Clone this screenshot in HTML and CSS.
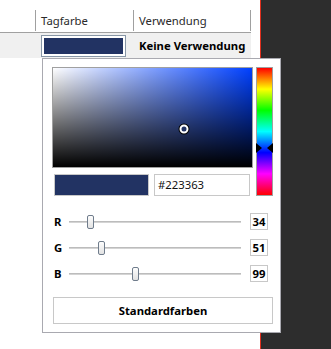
FILE: index.html
```html
<!DOCTYPE html>
<html>
<head>
<meta charset="utf-8">
<link rel="stylesheet" href="styles.css">
</head>
<body>
<div class="app">
  <div class="pane">
    <div class="header">
      <div class="hcell c1"></div>
      <div class="hcell c2">Tagfarbe</div>
      <div class="hcell c3">Verwendung</div>
    </div>
    <div class="row">
      <div class="cell c1"></div>
      <div class="cell c2"><div class="swatch"><div class="swatch-fill"></div></div></div>
      <div class="cell c3 bold">Keine Verwendung</div>
    </div>
  </div>
  <div class="redline"></div>
  <div class="dark"></div>

  <div class="popup">
    <div class="picker">
      <div class="sv">
        <div class="sv-white"></div>
        <div class="sv-black"></div>
        <div class="sv-marker" style="left:131px;top:61px"></div>
      </div>
      <div class="hue">
        <div class="tri tri-l" style="top:80px"></div>
        <div class="tri tri-r" style="top:80px"></div>
      </div>
      <div class="preview-row">
        <div class="preview"></div>
        <div class="hex">#223363</div>
      </div>
    </div>
    <div class="sliders">
      <div class="srow">
        <div class="slabel">R</div>
        <div class="track"><div class="thumb" style="left:18px"></div></div>
        <div class="sval">34</div>
      </div>
      <div class="srow">
        <div class="slabel">G</div>
        <div class="track"><div class="thumb" style="left:29px"></div></div>
        <div class="sval">51</div>
      </div>
      <div class="srow">
        <div class="slabel">B</div>
        <div class="track"><div class="thumb" style="left:63px"></div></div>
        <div class="sval">99</div>
      </div>
    </div>
    <div class="btn">Standardfarben</div>
  </div>
</div>
</body>
</html>
```
FILE: styles.css
```css
html, body {
  margin: 0;
  padding: 0;
}
body {
  font-family: "Noto Sans", "Open Sans", sans-serif;
  font-size: 11.3px;
  color: #000;
  background: #fff;
}
.app {
  position: relative;
  display: flex;
  width: 331px;
  height: 349px;
  overflow: hidden;
}
.pane {
  width: 260px;
  background: #fff;
}
.redline {
  width: 1px;
  background: #e0301e;
}
.dark {
  flex: 1;
  background: #2d2d2d;
}
.header {
  display: flex;
  margin-top: 10px;
  height: 21px;
  width: 251px;
}
.hcell {
  box-sizing: border-box;
  line-height: 21px;
  padding-left: 5px;
  white-space: nowrap;
  color: #2a2a2a;
}
.hcell.c2, .hcell.c3 {
  border-left: 1px solid #a0a0a0;
}
.hcell.c3 {
  border-right: 1px solid #a0a0a0;
}
.c1 { width: 35px; }
.c2 { width: 98px; }
.c3 { width: 118px; }
.row {
  display: flex;
  margin-top: 1px;
  border-top: 1px solid #a0a0a0;
  background: #f0f0f0;
  height: 25px;
  width: 251px;
}
.cell {
  box-sizing: border-box;
  white-space: nowrap;
}
.cell.c2 {
  padding: 2px 0 0 6px;
}
.cell.c3 {
  padding-left: 6px;
  line-height: 25px;
}
.bold { font-weight: bold; }
.swatch {
  box-sizing: border-box;
  width: 85px;
  height: 22px;
  border: 1px solid #8796a6;
  background: #fff;
  padding: 2px;
}
.swatch-fill {
  width: 100%;
  height: 100%;
  background: #223363;
}
.popup {
  position: absolute;
  left: 42px;
  top: 58px;
  width: 239px;
  height: 275px;
  box-sizing: border-box;
  background: #fff;
  border: 1px solid #a9a9b0;
  padding: 8px 8px 9px 9px;
  display: flex;
  flex-direction: column;
}
.picker {
  display: grid;
  grid-template-columns: 201px 17px;
  grid-template-rows: 101px 22px;
  column-gap: 3px;
  row-gap: 6px;
}
.sv {
  position: relative;
  box-sizing: border-box;
  border: 1px solid #a0a0a0;
  background: rgb(0, 64, 255);
}
.sv-white {
  position: absolute;
  inset: 0;
  background: linear-gradient(to right, #fff, rgba(255,255,255,0));
}
.sv-black {
  position: absolute;
  inset: 0;
  background: linear-gradient(to bottom, rgba(0,0,0,0), #000);
}
.sv-marker {
  position: absolute;
  width: 5px;
  height: 5px;
  border: 2px solid #fff;
  border-radius: 50%;
  background: #223363;
  box-shadow: 0 0 0 1px #000;
  transform: translate(-50%, -50%);
}
.hue {
  position: relative;
  grid-row: 1 / span 2;
  grid-column: 2;
  box-sizing: border-box;
  border: 1px solid #a0a0a0;
  background: linear-gradient(to bottom, #f00 0%, #ff0 16.67%, #0f0 33.33%, #0ff 50%, #00f 66.67%, #f0f 83.33%, #f00 100%);
}
.tri {
  position: absolute;
  width: 0;
  height: 0;
  border-top: 5px solid transparent;
  border-bottom: 5px solid transparent;
  transform: translateY(-50%);
}
.tri-l {
  left: -1px;
  border-left: 6px solid #000;
}
.tri-r {
  right: -1px;
  border-right: 6px solid #000;
}
.preview-row {
  display: flex;
  gap: 5px;
  padding-left: 2px;
  padding-right: 3px;
}
.preview {
  box-sizing: border-box;
  width: 95px;
  border: 1px solid #c8c8c8;
  background: #223363;
}
.hex {
  box-sizing: border-box;
  flex: 1;
  border: 1px solid #c8c8c8;
  padding-left: 3px;
  line-height: 20px;
  color: #111;
}
.sliders {
  display: flex;
  flex-direction: column;
  gap: 9px;
  margin-top: 17px;
}
.srow {
  display: flex;
  align-items: center;
  height: 17px;
}
.slabel {
  width: 17px;
  padding-left: 2px;
  box-sizing: border-box;
  font-weight: bold;
}
.track {
  position: relative;
  width: 172px;
  height: 2px;
  background: #d4d4d4;
  border-top: 1px solid #bcbcbc;
  box-sizing: border-box;
}
.thumb {
  position: absolute;
  top: -7px;
  width: 7px;
  height: 14px;
  box-sizing: border-box;
  border: 1px solid #6f7c8c;
  border-radius: 2px;
  background: linear-gradient(to bottom, #fdfdfd, #e2e2e2);
}
.sval {
  box-sizing: border-box;
  margin-left: 9px;
  width: 18px;
  height: 17px;
  border: 1px solid #c8c8c8;
  font-weight: bold;
  text-align: center;
  line-height: 15px;
}
.btn {
  box-sizing: border-box;
  margin-top: 15px;
  margin-left: 1px;
  width: 220px;
  height: 27px;
  border: 1px solid #c8c8c8;
  font-weight: bold;
  text-align: center;
  line-height: 25px;
}
```
